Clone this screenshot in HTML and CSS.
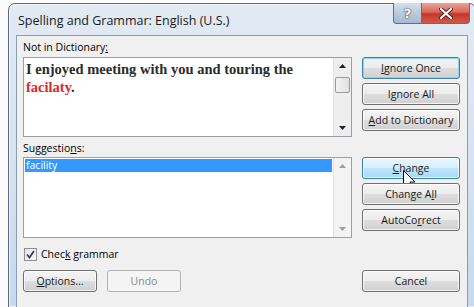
FILE: index.html
```html
<!DOCTYPE html>
<html>
<head>
    <title>Spelling and Grammar</title>
    <link rel="stylesheet" href="styles.css">
</head>
<body>
    <div class="window">
        <div class="titlebar">
            <span class="title">Spelling and Grammar: English (U.S.)</span>
            <div class="caption">
                <span class="cap-help">?</span>
                <span class="cap-close">
                    <svg width="14" height="11" viewBox="0 0 14 11">
                        <path d="M2 1 L12 10 M12 1 L2 10" stroke="#5a1a14" stroke-width="4" stroke-linecap="round"/>
                        <path d="M2 1 L12 10 M12 1 L2 10" stroke="#ffffff" stroke-width="2.2" stroke-linecap="round"/>
                    </svg>
                </span>
            </div>
        </div>

        <div class="client">
            <div class="lbl">Not in Dictionary<u>:</u></div>
            <div class="pane-row">
                <div class="box">
                    <div class="sentence">
                        I enjoyed meeting with you and touring the
                        <span class="misspelt">facilaty</span>.
                    </div>
                    <div class="vscroll">
                        <svg class="arrow" width="7" height="4" viewBox="0 0 7 4"><path d="M0 4 L3.5 0 L7 4 Z" fill="#222"/></svg>
                        <div class="thumb"></div>
                        <div class="track"></div>
                        <svg class="arrow" width="7" height="4" viewBox="0 0 7 4"><path d="M0 0 L3.5 4 L7 0 Z" fill="#222"/></svg>
                    </div>
                </div>
                <div class="btn-col">
                    <button class="btn btn-focus"><u>I</u>gnore Once</button>
                    <button class="btn">I<u>g</u>nore All</button>
                    <button class="btn"><u>A</u>dd to Dictionary</button>
                </div>
            </div>

            <div class="lbl lbl-second">Suggestio<u>n</u>s:</div>
            <div class="pane-row">
                <div class="box box-list">
                    <div class="list">
                        <div class="list-item selected">facility</div>
                    </div>
                    <div class="vscroll vscroll-off">
                        <svg class="arrow" width="7" height="4" viewBox="0 0 7 4"><path d="M0 4 L3.5 0 L7 4 Z" fill="#a0a0a0"/></svg>
                        <div class="track"></div>
                        <svg class="arrow" width="7" height="4" viewBox="0 0 7 4"><path d="M0 0 L3.5 4 L7 0 Z" fill="#a0a0a0"/></svg>
                    </div>
                </div>
                <div class="btn-col">
                    <button class="btn btn-hot"><u>C</u>hange
                        <svg class="pointer" width="13" height="21" viewBox="0 0 13 21">
                            <path d="M0.5 0.5 L0.5 17 L4.5 13 L7.5 19.5 L10 18.5 L7 12 L12 12 Z" fill="#ffffff" stroke="#000000" stroke-width="1" stroke-linejoin="round"/>
                        </svg>
                    </button>
                    <button class="btn">Change A<u>l</u>l</button>
                    <button class="btn">AutoCo<u>r</u>rect</button>
                </div>
            </div>

            <label class="check-row">
                <span class="checkbox">
                    <svg width="9" height="9" viewBox="0 0 9 9"><path d="M1 4.5 L3.5 7.5 L8 1" fill="none" stroke="#2a3f7a" stroke-width="1.8"/></svg>
                </span>
                <span>Chec<u>k</u> grammar</span>
            </label>

            <div class="footer">
                <button class="btn btn-small"><u>O</u>ptions...</button>
                <button class="btn btn-small btn-disabled">Undo</button>
                <button class="btn btn-cancel">Cancel</button>
            </div>
        </div>
    </div>
</body>
</html>
```

FILE: styles.css
```css
body {
    margin: 0;
    height: 307px;
    overflow: hidden;
    background: #fbfbfb;
    font-family: 'Open Sans', 'Noto Sans', Arial, sans-serif;
    font-size: 10.5px;
    color: #000;
}

u {
    text-decoration: underline;
    text-underline-offset: 1px;
}

.window {
    margin: 3px 0 0 8px;
    width: 466px;
    height: 303px;
    border: 1px solid #5d6975;
    border-radius: 7px 7px 0 0;
    background: linear-gradient(180deg, #e2eaf4 0%, #d6e3f1 50%, #c6d9ee 100%);
    box-shadow: inset 0 0 0 1px rgba(255, 255, 255, 0.6);
}

.titlebar {
    height: 31px;
    display: flex;
    justify-content: space-between;
    align-items: flex-start;
    padding-left: 9px;
}

.title {
    margin-top: 8px;
    font-size: 12.5px;
    color: #1a1a1a;
}

.caption {
    display: flex;
    margin-right: 5px;
    margin-top: -1px;
}

.cap-help,
.cap-close {
    height: 20px;
    display: flex;
    align-items: center;
    justify-content: center;
    border: 1px solid #5f6e80;
    border-top: none;
}

.cap-help {
    width: 27px;
    border-radius: 0 0 0 4px;
    border-right: none;
    background: linear-gradient(180deg, #d6e0ec 0%, #bccadb 50%, #a8b9cf 100%);
    color: #fff;
    font: bold 13px 'DejaVu Sans', sans-serif;
    text-shadow: 0 0 2px #334455, 0 0 1px #334455;
}

.cap-close {
    width: 47px;
    border-radius: 0 0 4px 0;
    background: linear-gradient(180deg, #e8a598 0%, #d9685a 45%, #c4372a 55%, #d05a48 100%);
}

.client {
    margin: 0 7px;
    height: 263px;
    border: 1px solid #8c9db0;
    background: #f0f0f0;
    padding: 4px 7px 7px 6px;
}

.lbl {
    height: 17px;
    line-height: 15px;
    color: #000;
}

.lbl-second {
    margin-top: 4px;
    height: 16px;
}

.pane-row {
    display: flex;
    gap: 10px;
}

.box {
    width: 329px;
    height: 80px;
    box-sizing: border-box;
    border: 1px solid #9a9ea5;
    background: #fff;
    display: flex;
}

.box-list {
    height: 81px;
}

.sentence {
    flex: 1;
    padding: 2px 4px 0 2px;
    font-family: 'Liberation Serif', 'Times New Roman', serif;
    font-weight: bold;
    font-size: 14.5px;
    line-height: 18px;
    color: #2b2b2b;
}

.misspelt {
    color: #e0262b;
}

.vscroll {
    width: 17px;
    display: flex;
    flex-direction: column;
    align-items: center;
    background: #eeeeee;
    border-left: 1px solid #e2e2e2;
}

.vscroll .arrow {
    margin: 6px 0;
}

.thumb {
    width: 13px;
    height: 14px;
    margin-top: 3px;
    border: 1px solid #9a9a9a;
    border-radius: 2px;
    background: linear-gradient(90deg, #f3f3f3, #e0e0e0);
}

.track {
    flex: 1;
}

.vscroll-off {
    background: #f3f3f3;
}

.list {
    flex: 1;
    padding: 1px;
}

.list-item {
    height: 13px;
    line-height: 12px;
    padding-left: 1px;
}

.list-item.selected {
    background: #3399ff;
    color: #fff;
}

.btn-col {
    width: 98px;
    display: flex;
    flex-direction: column;
    gap: 4px;
}

.btn {
    position: relative;
    height: 22px;
    padding: 0;
    border: 1px solid #707070;
    border-radius: 3px;
    background: linear-gradient(180deg, #f4f4f4 0%, #ececec 48%, #dddddd 52%, #d0d0d0 100%);
    box-shadow: inset 0 0 0 1px rgba(255, 255, 255, 0.75);
    font-family: inherit;
    font-size: 10.5px;
    color: #1a1a1a;
    line-height: 18px;
    white-space: nowrap;
}

.btn-focus {
    border-color: #3c7fb1;
    box-shadow: inset 0 0 0 1px #8fd3f5;
}

.btn-hot {
    border-color: #3c7fb1;
    background: linear-gradient(180deg, #eaf6fd 0%, #d9f0fc 48%, #bee6fd 52%, #a7d9f5 100%);
}

.pointer {
    position: absolute;
    left: 40px;
    top: 12px;
}

.check-row {
    display: flex;
    align-items: center;
    height: 16px;
    margin-top: 8px;
    padding-left: 1px;
    gap: 4px;
}

.checkbox {
    width: 11px;
    height: 11px;
    border: 1px solid #8e8f8f;
    background: linear-gradient(135deg, #e4e4e4, #fbfbfb);
    display: flex;
    align-items: center;
    justify-content: center;
}

.footer {
    display: flex;
    gap: 10px;
    margin-top: 8px;
}

.btn-small {
    width: 74px;
}

.btn-disabled {
    border-color: #adb2b5;
    background: #f4f4f4;
    box-shadow: none;
    color: #8a8a8a;
}

.btn-cancel {
    width: 98px;
    margin-left: auto;
}
```
